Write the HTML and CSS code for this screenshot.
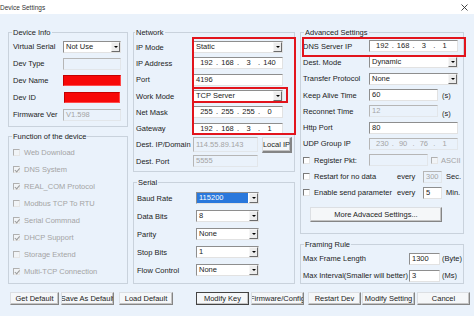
FILE: index.html
```html
<!DOCTYPE html>
<html lang="en">
<head>
  <meta charset="UTF-8">
  <title>Device Settings</title>
  <link rel="stylesheet" href="styles.css">
</head>
<body>
  <div class="titlebar">
    <span class="title">Device Settings</span>
    <svg class="close" width="7" height="7" viewBox="0 0 7 7"><path d="M0.5 0.5 L6.5 6.5 M6.5 0.5 L0.5 6.5" stroke="#333" stroke-width="0.9" fill="none"/></svg>
  </div>

  <div class="dialog">
    <div class="columns">

      <!-- left column -->
      <div class="col col-left">
        <div class="group info">
          <span class="legend">Device Info</span>
          <div class="row"><span class="lbl">Virtual Serial</span><div class="select w58"><span class="val">Not Use</span><span class="drop"></span></div></div>
          <div class="row"><span class="lbl">Dev Type</span><div class="field off w58"></div></div>
          <div class="row"><span class="lbl">Dev Name</span><div class="field red w58"></div></div>
          <div class="row"><span class="lbl">Dev ID</span><div class="field red w56"></div></div>
          <div class="row"><span class="lbl">Firmware Ver</span><div class="field off w58">V1.598</div></div>
        </div>

        <div class="group func">
          <span class="legend">Function of the device</span>
          <div class="row dim"><span class="cb off"></span>Web Download</div>
          <div class="row dim"><span class="cb off on"></span>DNS System</div>
          <div class="row dim"><span class="cb off on"></span>REAL_COM Protocol</div>
          <div class="row dim"><span class="cb off"></span>Modbus TCP To RTU</div>
          <div class="row dim"><span class="cb off on"></span>Serial Commnad</div>
          <div class="row dim"><span class="cb off on"></span>DHCP Support</div>
          <div class="row dim"><span class="cb off"></span>Storage Extend</div>
          <div class="row dim"><span class="cb off on"></span>Multi-TCP Connection</div>
        </div>
      </div>

      <!-- middle column -->
      <div class="col col-mid">
        <div class="group net">
          <span class="legend">Network</span>
          <div class="row"><span class="lbl">IP Mode</span><div class="select w90"><span class="val">Static</span><span class="drop"></span></div></div>
          <div class="row"><span class="lbl">IP Address</span><div class="field ip w90"><span>192</span><i>.</i><span>168</span><i>.</i><span>3</span><i>.</i><span>140</span></div></div>
          <div class="row"><span class="lbl">Port</span><div class="field w90">4196</div></div>
          <div class="row"><span class="lbl">Work Mode</span><div class="select w90"><span class="val">TCP Server</span><span class="drop"></span></div></div>
          <div class="row"><span class="lbl">Net Mask</span><div class="field ip w90"><span>255</span><i>.</i><span>255</span><i>.</i><span>255</span><i>.</i><span>0</span></div></div>
          <div class="row"><span class="lbl">Gateway</span><div class="field ip w90"><span>192</span><i>.</i><span>168</span><i>.</i><span>3</span><i>.</i><span>1</span></div></div>
          <div class="row"><span class="lbl">Dest. IP/Domain</span><div class="field off tall w65">114.55.89.143</div><button class="btn local">Local IP</button></div>
          <div class="row"><span class="lbl">Dest. Port</span><div class="field off w65">5555</div></div>
        </div>

        <div class="group serial">
          <span class="legend">Serial</span>
          <div class="row"><span class="lbl">Baud Rate</span><div class="select hl w63"><span class="val">115200</span><span class="drop"></span></div></div>
          <div class="row"><span class="lbl">Data Bits</span><div class="select w63"><span class="val">8</span><span class="drop"></span></div></div>
          <div class="row"><span class="lbl">Parity</span><div class="select w63"><span class="val">None</span><span class="drop"></span></div></div>
          <div class="row"><span class="lbl">Stop Bits</span><div class="select w63"><span class="val">1</span><span class="drop"></span></div></div>
          <div class="row"><span class="lbl">Flow Control</span><div class="select w63"><span class="val">None</span><span class="drop"></span></div></div>
        </div>
      </div>

      <!-- right column -->
      <div class="col col-right">
        <div class="group adv">
          <span class="legend">Advanced Settings</span>
          <div class="row"><span class="lbl">DNS Server IP</span><div class="field ip w89"><span>192</span><i>.</i><span>168</span><i>.</i><span>3</span><i>.</i><span>1</span></div></div>
          <div class="row"><span class="lbl">Dest. Mode</span><div class="select w89"><span class="val">Dynamic</span><span class="drop"></span></div></div>
          <div class="row"><span class="lbl">Transfer Protocol</span><div class="select w89"><span class="val">None</span><span class="drop"></span></div></div>
          <div class="row"><span class="lbl">Keep Alive Time</span><div class="field w69">60</div><span class="unit">(s)</span></div>
          <div class="row"><span class="lbl">Reconnet Time</span><div class="field off w69">12</div><span class="unit low">(s)</span></div>
          <div class="row"><span class="lbl">Http Port</span><div class="field w89">80</div></div>
          <div class="row"><span class="lbl">UDP Group IP</span><div class="field ip off w89"><span>230</span><i>.</i><span>90</span><i>.</i><span>76</span><i>.</i><span>1</span></div></div>
          <div class="row"><span class="lbl"><span class="cb"></span>Register Pkt:</span><div class="field off w59"></div><span class="cb off ascii"></span><span class="dim">ASCII</span></div>
          <div class="row"><span class="lbl wide"><span class="cb"></span>Restart for no data</span><span class="every">every</span><div class="field off w19">300</div><span class="unit">Sec.</span></div>
          <div class="row"><span class="lbl wide"><span class="cb"></span>Enable send parameter</span><span class="every">every</span><div class="field w19">5</div><span class="unit">Min.</span></div>
          <button class="btn more">More Advaced Settings...</button>
        </div>

        <div class="group frame">
          <span class="legend">Framing Rule</span>
          <div class="row"><span class="lbl">Max Frame Length</span><div class="field w31">1300</div><span class="unit">(Byte)</span></div>
          <div class="row"><span class="lbl">Max Interval(Smaller will better)</span><div class="field w31">3</div><span class="unit">(Ms)</span></div>
        </div>
      </div>
    </div>

    <div class="actions">
      <button class="btn b-get">Get Default</button>
      <button class="btn b-save">Save As Default</button>
      <button class="btn b-load">Load Default</button>
      <button class="btn b-key">Modify Key</button>
      <button class="btn b-fw">Firmware/Config</button>
      <button class="btn b-restart">Restart Dev</button>
      <button class="btn b-modify">Modify Setting</button>
      <button class="btn b-cancel">Cancel</button>
    </div>
  </div>

  <!-- red annotation frames drawn over the dialog -->
  <div class="mark mark-net"></div>
  <div class="mark mark-mode"></div>
  <div class="mark mark-dns"></div>
</body>
</html>
```

FILE: styles.css
```css
:root {
  --bg: #eaf2fb;
  --line: #c9d2dc;
  --text: #1c1c1c;
  --dim: #a4a4a4;
  --red: #e2141c;
}
* {
  box-sizing: border-box;
}
body {
  margin: 0;
  width: 474px;
  height: 316px;
  overflow: hidden;
  position: relative;
  background: var(--bg);
  font-family: "Liberation Sans", Arial, sans-serif;
  font-size: 7.5px;
  color: var(--text);
}
.titlebar {
  height: 14px;
  background: #fff;
  display: flex;
  align-items: center;
  justify-content: space-between;
  padding-right: 6px;
  font-size: 6.5px;
  color: #333;
}
.dialog {
  padding: 18px 0 0 8px;
}
.columns {
  display: flex;
  gap: 5px;
}
.col {
  display: flex;
  flex-direction: column;
}
.col-left { width: 120px; }
.col-mid { width: 162px; }
.col-right { width: 164px; }

.group {
  position: relative;
  border: 1px solid var(--line);
}
.legend {
  position: absolute;
  top: -5px;
  left: 3px;
  padding: 0 1px;
  line-height: 9px;
  background: var(--bg);
}
.row {
  display: flex;
  align-items: center;
}
.lbl {
  flex: none;
  white-space: nowrap;
  display: flex;
  align-items: center;
}
.dim { color: var(--dim); }

/* group boxes */
.info {
  height: 95px;
  padding: 5px 0 0 4px;
}
.info .row { height: 17px; }
.info .lbl { width: 50px; }

.func {
  height: 148px;
  margin-top: 9px;
  padding: 7px 0 0 4px;
}
.func .row { height: 17px; }

.net {
  height: 140px;
  padding: 6px 0 0 2px;
}
.net .legend { left: 1px; }
.net .row { height: 16.3px; }
.net .lbl { width: 57px; }

.serial {
  height: 102px;
  margin-top: 10px;
  padding: 6px 0 0 3px;
}
.serial .row { height: 18px; }
.serial .lbl { width: 59px; }

.adv {
  height: 202px;
  padding: 5px 0 0 2px;
}
.adv .row { height: 16.3px; }
.adv .lbl { width: 66px; }
.adv .lbl.wide { width: 94px; }

.frame {
  height: 40px;
  margin-top: 10px;
  padding: 5px 0 0 2px;
}
.frame .row { height: 17px; }
.frame .lbl { width: 106px; }

/* inputs */
.field {
  height: 12px;
  border: 1px solid;
  border-color: #8e8e8e #e2e2e2 #e2e2e2 #8e8e8e;
  background: #fff;
  padding: 0 2px;
  line-height: 10px;
  white-space: nowrap;
  overflow: hidden;
  flex: none;
}
.field.off {
  background: transparent;
  color: var(--dim);
  border-color: #b6b6b6 #e2e6ea #e2e6ea #b6b6b6;
}
.field.red {
  height: 11px;
  background: #f70808;
  border-color: #c40000 #ff4a4a #ff4a4a #c40000;
}
.field.tall {
  height: 15px;
  line-height: 13px;
}
.field.ip {
  display: grid;
  grid-template-columns: 1fr auto 1fr auto 1fr auto 1fr;
  text-align: center;
  padding: 0 3px;
}
.field.ip i {
  font-style: normal;
}
.w19 { width: 19px; }
.w31 { width: 31px; }
.w56 { width: 56px; margin-left: 1px; }
.w58 { width: 58px; }
.w59 { width: 59px; }
.w63 { width: 63px; }
.w65 { width: 65px; }
.w69 { width: 69px; }
.w89 { width: 89px; }
.w90 { width: 90px; }

.select {
  display: flex;
  height: 12px;
  border: 1px solid;
  border-color: #8e8e8e #e2e2e2 #e2e2e2 #8e8e8e;
  background: #fff;
  flex: none;
}
.select .val {
  flex: 1;
  padding: 0 2px;
  line-height: 10px;
  white-space: nowrap;
  overflow: hidden;
}
.select.hl .val {
  background: #2a78dc;
  color: #fff;
  margin: 0 1px 0 0;
}
.drop {
  width: 9px;
  flex: none;
  border: 1px solid;
  border-color: #f6f6f6 #6c6c6c #6c6c6c #f6f6f6;
  background: #ececec;
  display: flex;
  align-items: center;
  justify-content: center;
}
.drop::after {
  content: "";
  border-left: 2px solid transparent;
  border-right: 2px solid transparent;
  border-top: 2.5px solid #000;
}
.unit {
  margin-left: 6px;
  white-space: nowrap;
}
.unit.low { padding-top: 5px; }
.frame .unit { margin-left: 2px; }
.every { width: 26px; flex: none; }
.adv .row .unit:last-child { margin-left: 4px; }
.adv .w69 + .unit { margin-left: 7px; }

/* check boxes */
.cb {
  position: relative;
  width: 7px;
  height: 7px;
  flex: none;
  margin-right: 4px;
  border: 1px solid;
  border-color: #7a7a7a #e6e6e6 #e6e6e6 #7a7a7a;
  background: #fff;
}
.cb.off {
  background: #f1f4f7;
  border-color: #b0b0b0 #e6e6e6 #e6e6e6 #b0b0b0;
}
.cb.on::after {
  content: "";
  position: absolute;
  left: 1.5px;
  top: -0.5px;
  width: 1.5px;
  height: 3.5px;
  border: solid #9a9a9a;
  border-width: 0 1px 1px 0;
  transform: rotate(40deg);
}
.cb.ascii {
  margin-left: 3px;
  margin-right: 3px;
}

/* buttons */
.btn {
  height: 13px;
  padding: 0;
  display: inline-flex;
  align-items: center;
  justify-content: center;
  white-space: nowrap;
  overflow: hidden;
  font: inherit;
  color: inherit;
  background: #f5f7f9;
  border: 1px solid;
  border-color: #dcdfe3 #858585 #858585 #dcdfe3;
  box-shadow: inset -1px -1px 0 #c4c4c4;
  flex: none;
}
.btn.local {
  width: 30px;
  height: 16px;
  margin-left: 4px;
  border-width: 1px 2px 2px 1px;
}
.btn.more {
  display: flex;
  width: 132px;
  height: 15px;
  margin: 6px 0 0 7px;
}
.actions {
  display: flex;
  margin-top: 8px;
  padding-left: 2px;
}
.b-get { width: 49px; }
.b-save { width: 53px; margin-left: 2px; }
.b-load { width: 54px; margin-left: 5px; }
.b-key {
  width: 53px;
  margin-left: 23px;
  border-color: #444;
}
.b-fw { width: 53px; margin-left: 2px; }
.b-restart { width: 53px; margin-left: 4px; }
.b-modify { width: 53px; margin-left: 1px; }
.b-cancel { width: 53px; margin-left: 2px; }

/* red annotation frames */
.mark {
  position: absolute;
  border: 2px solid var(--red);
  pointer-events: none;
}
.mark-net {
  left: 192px;
  top: 37px;
  width: 104px;
  height: 98px;
}
.mark-mode {
  left: 192px;
  top: 87px;
  width: 96px;
  height: 16px;
}
.mark-dns {
  left: 302px;
  top: 37px;
  width: 164px;
  height: 20px;
}
```
